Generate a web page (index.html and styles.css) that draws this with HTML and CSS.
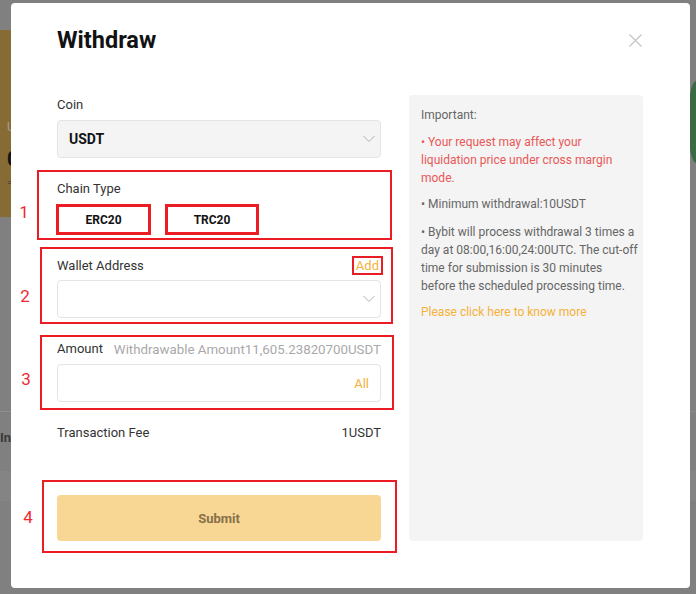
FILE: index.html
```html
<!DOCTYPE html>
<html lang="en">
<head>
<meta charset="utf-8">
<title>Withdraw</title>
<link rel="stylesheet" href="styles.css">
</head>
<body>
<div class="page">
  <div class="page-top">
    <div class="hero-card">
      <span class="hero-label">U</span>
      <span class="hero-num">0</span>
      <span class="hero-eq">=</span>
    </div>
    <div class="green-dot"></div>
  </div>
  <div class="page-rule"></div>
  <div class="page-row">In</div>
  <div class="page-band"></div>
</div>

<div class="modal">
  <header class="modal-head">
    <h1 class="title">Withdraw</h1>
    <button class="close" type="button" aria-label="Close">
      <svg width="13" height="13" viewBox="0 0 13 13"><path d="M0.5 0.5L12.5 12.5M12.5 0.5L0.5 12.5" stroke="#c2c2c2" stroke-width="1.1" fill="none"/></svg>
    </button>
  </header>
  <div class="modal-body">
    <div class="form">
      <div class="label">Coin</div>
      <div class="select">
        <span class="select-value">USDT</span>
        <svg class="chev" width="12" height="8" viewBox="0 0 12 8"><path d="M0.5 1L6 6.5L11.5 1" stroke="#b0b0b0" stroke-width="1" fill="none"/></svg>
      </div>

      <div class="mark mark-chain">
        <span class="mark-num num-1">1</span>
        <div class="label">Chain Type</div>
        <div class="chains">
          <div class="chain">ERC20</div>
          <div class="chain chain-2">TRC20</div>
        </div>
      </div>

      <div class="mark mark-wallet">
        <span class="mark-num num-2">2</span>
        <div class="label-row">
          <span class="label">Wallet Address</span>
          <span class="add">Add</span>
        </div>
        <div class="field field-wallet">
          <svg class="chev" width="12" height="8" viewBox="0 0 12 8"><path d="M0.5 1L6 6.5L11.5 1" stroke="#b0b0b0" stroke-width="1" fill="none"/></svg>
        </div>
      </div>

      <div class="mark mark-amount">
        <span class="mark-num num-3">3</span>
        <div class="label-row">
          <span class="label">Amount</span>
          <span class="hint">Withdrawable Amount11,605.23820700USDT</span>
        </div>
        <div class="field field-amount">
          <span class="all">All</span>
        </div>
      </div>

      <div class="fee-row">
        <span>Transaction Fee</span>
        <span>1USDT</span>
      </div>

      <div class="mark mark-submit">
        <span class="mark-num num-4">4</span>
        <button class="submit" type="button">Submit</button>
      </div>
    </div>

    <aside class="notice">
      <p class="notice-title">Important:</p>
      <p class="notice-warn">• Your request may affect your<br>liquidation price under cross margin<br>mode.</p>
      <p class="notice-min">• Minimum withdrawal:10USDT</p>
      <p class="notice-proc">• Bybit will process withdrawal 3 times a<br>day at 08:00,16:00,24:00UTC. The cut-off<br>time for submission is 30 minutes<br>before the scheduled processing time.</p>
      <p class="notice-link">Please click here to know more</p>
    </aside>
  </div>
</div>
</body>
</html>
```

FILE: styles.css
```css
html, body {
  margin: 0;
  padding: 0;
}

body {
  width: 696px;
  height: 594px;
  overflow: hidden;
  position: relative;
  background: #808080;
  font-family: Roboto, "Noto Sans", "Liberation Sans", sans-serif;
  color: #333;
}

/* ---------- page behind the overlay ---------- */
.page {
  display: flex;
  flex-direction: column;
  height: 594px;
  overflow: hidden;
}

.page-top {
  display: flex;
  justify-content: space-between;
  align-items: flex-start;
  margin-top: 30px;
}

.hero-card {
  width: 300px;
  height: 187px;
  background: #876b35;
  display: flex;
  flex-direction: column;
  padding-left: 7px;
  box-sizing: border-box;
}

.hero-label {
  margin-top: 90px;
  font-size: 12px;
  line-height: 14px;
  color: #a8a090;
}

.hero-num {
  margin-top: 14px;
  font-size: 20px;
  line-height: 22px;
  font-weight: 700;
  color: #111;
}

.hero-eq {
  margin-top: 8px;
  font-size: 10px;
  line-height: 10px;
  color: #5a4a2a;
}

.green-dot {
  width: 8px;
  height: 82px;
  margin-top: 51px;
  border-radius: 8px 0 0 8px / 41px 0 0 41px;
  background: #3b6b44;
}

.page-rule {
  margin-top: 194px;
  height: 1px;
  background: #8e8e8e;
}

.page-row {
  margin-top: 17px;
  font-size: 13px;
  font-weight: 700;
  color: #3a3a3a;
  line-height: 18px;
}

.page-band {
  margin-top: 24px;
  height: 30px;
  background: #848484;
}

/* ---------- modal ---------- */
.modal {
  position: absolute;
  left: 11px;
  top: 3px;
  width: 679px;
  height: 585px;
  box-sizing: border-box;
  padding: 0 47px 0 46px;
  background: #fff;
  border-radius: 4px;
}

.modal-head {
  height: 74px;
  display: flex;
  align-items: center;
  justify-content: space-between;
}

.title {
  margin: 0;
  font-size: 23.5px;
  line-height: 28px;
  font-weight: 700;
  color: #121214;
}

.close {
  width: 13px;
  height: 13px;
  padding: 0;
  margin-right: 1px;
  border: 0;
  background: none;
  display: flex;
}

.modal-body {
  margin-top: 18px;
  display: flex;
  gap: 28px;
  align-items: flex-start;
}

.form {
  width: 324px;
  display: flex;
  flex-direction: column;
  padding-top: 1px;
}

.label {
  font-size: 13px;
  line-height: 18px;
  color: #333;
}

.select {
  margin-top: 6px;
  height: 38px;
  box-sizing: border-box;
  border: 1px solid #e4e4e4;
  border-radius: 4px;
  background: #f4f4f4;
  display: flex;
  align-items: center;
  justify-content: space-between;
  padding: 0 5px 0 11px;
}

.select-value {
  font-size: 14px;
  font-weight: 700;
  color: #121214;
}

/* annotation boxes */
.mark {
  position: relative;
  border: 2px solid #ec1c24;
  display: flex;
  flex-direction: column;
}

.mark-num {
  position: absolute;
  width: 20px;
  text-align: center;
  font-size: 17px;
  line-height: 20px;
  color: #ee2a31;
}

.num-1 { top: 30px; left: -25px; }
.num-2 { top: 37px; left: -27px; }
.num-3 { top: 32px; left: -26px; }
.num-4 { top: 25px; left: -26px; }

.mark-chain {
  margin: 12px -11px 0 -20px;
  padding: 8px 9px 3px 18px;
}

.chains {
  display: flex;
  gap: 14px;
  margin-top: 6px;
  margin-left: -1px;
}

.chain {
  width: 95px;
  height: 31px;
  box-sizing: border-box;
  border: 3px solid #ec1c24;
  display: flex;
  align-items: center;
  justify-content: center;
  font-size: 12px;
  font-weight: 700;
  color: #121214;
}

.chain-2 {
  width: 94px;
}

.mark-wallet {
  margin: 7px -12px 0 -17px;
  padding: 8px 10px 4px 15px;
}

.label-row {
  display: flex;
  align-items: center;
  justify-content: space-between;
  height: 18px;
}

.add {
  margin-right: -2px;
  margin-top: -2px;
  border: 2px solid #ec1c24;
  padding: 0 2px;
  font-size: 13px;
  line-height: 15px;
  color: #f5b13a;
}

.field {
  margin-top: 5px;
  height: 38px;
  box-sizing: border-box;
  border: 1px solid #e4e4e4;
  border-radius: 4px;
  background: #fff;
  display: flex;
  align-items: center;
  justify-content: flex-end;
  padding: 0 5px 0 11px;
}

.mark-amount {
  margin: 11px -13px 0 -17px;
  padding: 3px 11px 6px 15px;
}

.hint {
  font-size: 13.3px;
  color: #a9a9a9;
}

.field-amount {
  margin-top: 6px;
  padding-right: 11px;
}

.all {
  font-size: 13px;
  color: #f5b13a;
}

.fee-row {
  margin-top: 14px;
  display: flex;
  justify-content: space-between;
  font-size: 13px;
  line-height: 18px;
  color: #333;
}

.mark-submit {
  margin: 38px -16px 0 -15px;
  padding: 13px 14px 10px 13px;
}

.submit {
  height: 46px;
  border: 0;
  border-radius: 4px;
  background: #f8d693;
  font-family: inherit;
  font-size: 13px;
  font-weight: 700;
  color: #87704a;
}

/* right panel */
.notice {
  width: 234px;
  height: 446px;
  box-sizing: border-box;
  padding: 11px 12px;
  background: #f4f4f4;
  border-radius: 4px;
  font-size: 12px;
  line-height: 18px;
  color: #666;
}

.notice p {
  margin: 0;
  white-space: nowrap;
}

.notice-warn {
  margin-top: 9px !important;
  color: #ea5757;
}

.notice-min {
  margin-top: 8px !important;
}

.notice-proc {
  margin-top: 10px !important;
}

.notice-link {
  margin-top: 8px !important;
  color: #f5b13a;
}
```
